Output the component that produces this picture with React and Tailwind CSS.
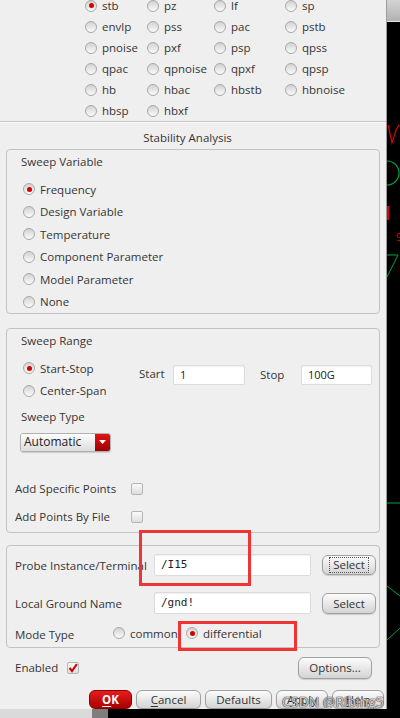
import React from 'react'

const font = { fontFamily: '"Open Sans", "Noto Sans", sans-serif' }

function Radio({ checked }) {
  return (
    <span className="w-[12px] h-[12px] rounded-full border border-[#a8a8a8] bg-linear-to-b from-[#d2d2d2] to-[#fbfbfb] flex items-center justify-center shrink-0">
      {checked && <span className="w-[5px] h-[5px] rounded-full bg-[#d40000]" />}
    </span>
  )
}

function RadioItem({ label, checked, className = '' }) {
  return (
    <div className={`flex items-center gap-[5px] ${className}`}>
      <Radio checked={checked} />
      <span>{label}</span>
    </div>
  )
}

function Check({ checked }) {
  return (
    <span className="w-[12px] h-[12px] rounded-[2px] border border-[#b4b4b4] bg-linear-to-b from-[#fafafa] to-[#dedede] flex items-center justify-center shrink-0">
      {checked && (
        <svg width="10" height="10" viewBox="0 0 10 10">
          <path d="M1.5 5 L4 8 L8.8 1.2" fill="none" stroke="#d00000" strokeWidth="2" />
        </svg>
      )}
    </span>
  )
}

function Button({ children, className = '', focus = false }) {
  return (
    <div className={`rounded-[6px] border border-[#a0a0a0] bg-linear-to-b from-[#fcfcfc] to-[#d4d4d4] shadow-[0_1px_1px_rgba(0,0,0,0.15)] flex items-center justify-center text-[#333] ${className}`}>
      {focus ? (
        <span className="border border-dotted border-[#555] px-[3px] leading-[14px]">{children}</span>
      ) : children}
    </div>
  )
}

function Field({ value, className = '', mono = false }) {
  return (
    <div
      className={`bg-white border border-[#dcdcdc] rounded-[2px] shadow-[inset_0_1px_1px_rgba(0,0,0,0.06)] flex items-center px-[6px] text-[#222] ${className}`}
      style={mono ? { fontFamily: '"DejaVu Sans Mono", "Liberation Mono", monospace', fontSize: '11px' } : { fontSize: '11px' }}
    >
      {value}
    </div>
  )
}

const analyses = [
  ['stb', true], ['pz'], ['lf'], ['sp'],
  ['envlp'], ['pss'], ['pac'], ['pstb'],
  ['pnoise'], ['pxf'], ['psp'], ['qpss'],
  ['qpac'], ['qpnoise'], ['qpxf'], ['qpsp'],
  ['hb'], ['hbac'], ['hbstb'], ['hbnoise'],
  ['hbsp'], ['hbxf'],
]

const sweepVars = ['Frequency', 'Design Variable', 'Temperature', 'Component Parameter', 'Model Parameter', 'None']

export default function App() {
  return (
    <div className="w-[400px] h-[718px] bg-black flex overflow-hidden text-[11.5px] text-[#353535]" style={font}>
      {/* left column: dialog + strip under it */}
      <div className="w-[387px] flex flex-col shrink-0">
        <div className="relative h-[709px] bg-[#efefef] border-r border-[#9c9c9c] flex flex-col overflow-hidden">
          {/* analysis list */}
          <div className="grid grid-cols-[62px_67px_71px_auto] pl-[85px] mt-[-5px]">
            {analyses.map(([name, on]) => (
              <RadioItem key={name} label={name} checked={on} className="h-[21px]" />
            ))}
            <div className="h-[21px]" />
          </div>
          <div className="h-px bg-[#c6c6c6]" />
          <div className="h-px bg-[#fafafa]" />

          <div className="h-[26px] pt-[4px] flex items-center justify-center pr-[11px]">Stability Analysis</div>

          {/* Sweep Variable */}
          <div className="mx-[6px] h-[165px] border border-[#c2c2c2] rounded-[4px] pt-[2px]">
            <div className="h-[20px] pl-[14px] flex items-center">Sweep Variable</div>
            <div className="mt-[6px] pl-[16px]">
              {sweepVars.map((v, i) => (
                <RadioItem key={v} label={v} checked={i === 0} className="h-[22.5px]" />
              ))}
            </div>
          </div>

          {/* Sweep Range */}
          <div className="mx-[6px] mt-[14px] h-[206px] border border-[#c2c2c2] rounded-[4px] pt-[2px]">
            <div className="h-[20px] pl-[14px] flex items-center">Sweep Range</div>
            <div className="flex mt-[6px]">
              <div className="w-[132px] pl-[16px]">
                <RadioItem label="Start-Stop" checked className="h-[22.5px]" />
                <RadioItem label="Center-Span" className="h-[22.5px]" />
              </div>
              <div className="flex items-center h-[20px] mt-[8px]">
                <span className="w-[34px] mb-[2px]">Start</span>
                <Field value="1" className="w-[72px] h-[20px]" />
                <span className="w-[41px] ml-[15px]">Stop</span>
                <Field value="100G" className="w-[71px] h-[20px]" />
              </div>
            </div>
            <div className="h-[20px] pl-[14px] mt-[5px] flex items-center">Sweep Type</div>
            <div className="ml-[13px] mt-[6px] w-[91px] h-[19px] rounded-[3px] border border-[#b0b0b0] flex overflow-hidden shadow-[0_1px_1px_rgba(0,0,0,0.15)]">
              <div className="flex-1 bg-linear-to-b from-[#fdfdfd] to-[#dcdcdc] flex items-center pl-[3px] text-[#222] text-[12px]">Automatic</div>
              <div className="w-[15px] bg-linear-to-b from-[#e01515] to-[#a00000] flex items-center justify-center">
                <svg width="7" height="4" viewBox="0 0 7 4"><path d="M0 0 H7 L3.5 4 Z" fill="#fff" /></svg>
              </div>
            </div>
            <div className="mt-[26px] pl-[8px]">
              <div className="h-[22px] flex items-center">
                <span className="w-[116px]">Add Specific Points</span>
                <Check />
              </div>
              <div className="h-[22px] mt-[6px] flex items-center">
                <span className="w-[116px]">Add Points By File</span>
                <Check />
              </div>
            </div>
          </div>

          {/* Probe */}
          <div className="mx-[6px] mt-[12px] h-[103px] border border-[#c2c2c2] rounded-[4px] pl-[8px]">
            <div className="mt-[8px] h-[22px] flex items-center">
              <span className="w-[139px]">Probe Instance/Terminal</span>
              <Field value="/I15" mono className="w-[157px] h-[22px]" />
              <Button focus className="ml-[11px] w-[54px] h-[20px]">Select</Button>
            </div>
            <div className="mt-[16px] h-[22px] flex items-center">
              <span className="w-[139px]">Local Ground Name</span>
              <Field value="/gnd!" mono className="w-[157px] h-[22px]" />
              <Button className="ml-[11px] w-[54px] h-[21px]">Select</Button>
            </div>
            <div className="mt-[9px] h-[20px] flex items-center">
              <span className="w-[98px] mt-[3px]">Mode Type</span>
              <RadioItem label="common" className="w-[73px]" />
              <RadioItem label="differential" checked />
            </div>
          </div>

          {/* Enabled / Options */}
          <div className="mt-[9px] h-[22px] flex items-center pl-[15px] pr-[14px]">
            <span className="w-[52px]">Enabled</span>
            <Check checked />
            <div className="flex-1" />
            <Button className="w-[74px] h-[22px]">Options...</Button>
          </div>

          {/* bottom buttons */}
          <div className="mt-[11px] h-[19px] flex items-center pl-[89px] gap-[4px]">
            <div className="w-[43px] h-[19px] rounded-[6px] border border-[#8a0000] bg-linear-to-b from-[#e81c1c] to-[#a80000] flex items-center justify-center text-white font-bold">
              <span className="underline underline-offset-2">O</span>K
            </div>
            <Button className="w-[65px] h-[19px]"><span className="underline underline-offset-2">C</span>ancel</Button>
            <Button className="w-[67px] h-[19px]">Defaults</Button>
            <Button className="w-[52px] h-[19px]"><span className="underline underline-offset-2">A</span>pply</Button>
            <Button className="w-[52px] h-[19px]"><span className="underline underline-offset-2">H</span>elp</Button>
          </div>

          {/* annotations */}
          <div className="absolute left-[139px] top-[530px] w-[112px] h-[56px] border-[3px] border-[#ef3434]" />
          <div className="absolute left-[178px] top-[621px] w-[119px] h-[30px] border-[3px] border-[#ef3434]" />
          <div className="absolute left-[282px] top-[691px] text-[14px] text-[#f2f2f2]/80 [text-shadow:0_0_1px_#444,0_0_1px_#444,0_0_1px_#444]">CSDN @Ribing5</div>
        </div>
        <div className="h-[9px] flex">
          <div className="w-[92px] bg-[#dadada]" />
          <div className="w-[16px] bg-[#7e7e7e]" />
          <div className="flex-1 bg-black" />
        </div>
      </div>

      {/* right strip */}
      <div className="flex-1 flex flex-col">
        <div className="h-[22px] bg-linear-to-b from-[#d4d4d4] to-[#b2b2b2] border-b border-[#e6e6e6]" />
        <svg className="flex-1" width="13" height="696" viewBox="0 0 13 696">
          <path d="M1 103 L5 121 L9 108 L12 103" fill="none" stroke="#e00000" strokeWidth="1.2" />
          <circle cx="0" cy="151" r="12" fill="none" stroke="#00a040" strokeWidth="1.2" />
          <rect x="0" y="184" width="2" height="14" fill="#e00000" />
          <text x="9" y="219" fontSize="10" fill="#e00000">9</text>
          <path d="M0 255 L11 233 L0 233" fill="none" stroke="#00a040" strokeWidth="1" />
          <path d="M0 481 H13" stroke="#00a040" strokeWidth="1" />
          <path d="M0 564 L13 574" stroke="#00a040" strokeWidth="1" />
          <path d="M0 618 L13 606" stroke="#00a040" strokeWidth="1" />
        </svg>
      </div>
    </div>
  )
}
